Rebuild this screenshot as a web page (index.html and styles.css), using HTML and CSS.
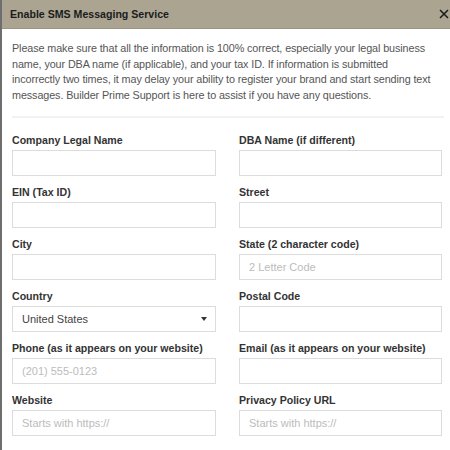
FILE: index.html
```html
<!DOCTYPE html>
<html>
<head>
<meta charset="utf-8">
<link rel="stylesheet" href="styles.css">
</head>
<body>
<div class="modal">
  <div class="modal-header">
    <span class="modal-title">Enable SMS Messaging Service</span>
    <svg class="close" width="10" height="10" viewBox="0 0 10 10"><path d="M1 1L9 9M9 1L1 9" stroke="#1e1e1e" stroke-width="1.6" fill="none"/></svg>
  </div>
  <div class="modal-body">
    <p class="intro">Please make sure that all the information is 100% correct, especially your legal business name, your DBA name (if applicable), and your tax ID. If information is submitted incorrectly two times, it may delay your ability to register your brand and start sending text messages. Builder Prime Support is here to assist if you have any questions.</p>
    <div class="divider"></div>
    <div class="form-grid">
      <div class="field"><label>Company Legal Name</label><div class="input"></div></div>
      <div class="field"><label>DBA Name (if different)</label><div class="input"></div></div>
      <div class="field"><label>EIN (Tax ID)</label><div class="input"></div></div>
      <div class="field"><label>Street</label><div class="input"></div></div>
      <div class="field"><label>City</label><div class="input"></div></div>
      <div class="field"><label>State (2 character code)</label><div class="input placeholder">2 Letter Code</div></div>
      <div class="field"><label>Country</label><div class="input select"><span>United States</span><span class="caret"></span></div></div>
      <div class="field"><label>Postal Code</label><div class="input"></div></div>
      <div class="field"><label>Phone (as it appears on your website)</label><div class="input placeholder">(201) 555-0123</div></div>
      <div class="field"><label>Email (as it appears on your website)</label><div class="input"></div></div>
      <div class="field"><label>Website</label><div class="input placeholder">Starts with https://</div></div>
      <div class="field"><label>Privacy Policy URL</label><div class="input placeholder">Starts with https://</div></div>
    </div>
  </div>
</div>
</body>
</html>
```
FILE: styles.css
```css
html, body {
  margin: 0;
  padding: 0;
  height: 100%;
  overflow: hidden;
}
body {
  background: #6e6e6e;
  font-family: "Liberation Sans", Arial, Helvetica, sans-serif;
}
.modal {
  margin-left: 2px;
  width: 450px;
  height: 100%;
  background: #fff;
}
.modal-header {
  height: 29px;
  box-sizing: border-box;
  background: #aaa491;
  border-bottom: 1px solid #9a9482;
  display: flex;
  align-items: center;
  justify-content: space-between;
  padding: 0 3px 0 8px;
}
.modal-title {
  font-size: 10.6px;
  font-weight: bold;
  color: #1c1c1c;
}
.close {
  display: block;
  margin-top: -1px;
}
.modal-body {
  padding: 12px 8px 0 10px;
}
.intro {
  margin: 0;
  max-width: 421px;
  font-size: 10.8px;
  letter-spacing: -0.1px;
  line-height: 15.5px;
  color: #555;
}
.divider {
  height: 2px;
  background: #f2f2f2;
  margin-top: 13px;
}
.form-grid {
  margin-top: 15px;
  display: grid;
  grid-template-columns: 204px 203px;
  column-gap: 23px;
  row-gap: 9px;
}
.field label {
  display: block;
  font-size: 10.6px;
  line-height: 14px;
  font-weight: bold;
  color: #333;
  margin-bottom: 3px;
}
.input {
  height: 26px;
  box-sizing: border-box;
  border: 1px solid #dcdcdc;
  display: flex;
  align-items: center;
  padding: 0 9px;
  font-size: 11px;
  color: #444;
}
.placeholder {
  color: #bcbcbc;
}
.select {
  justify-content: space-between;
}
.caret {
  width: 0;
  height: 0;
  border-left: 3.5px solid transparent;
  border-right: 3.5px solid transparent;
  border-top: 4px solid #333;
  margin-right: -1px;
}
```
